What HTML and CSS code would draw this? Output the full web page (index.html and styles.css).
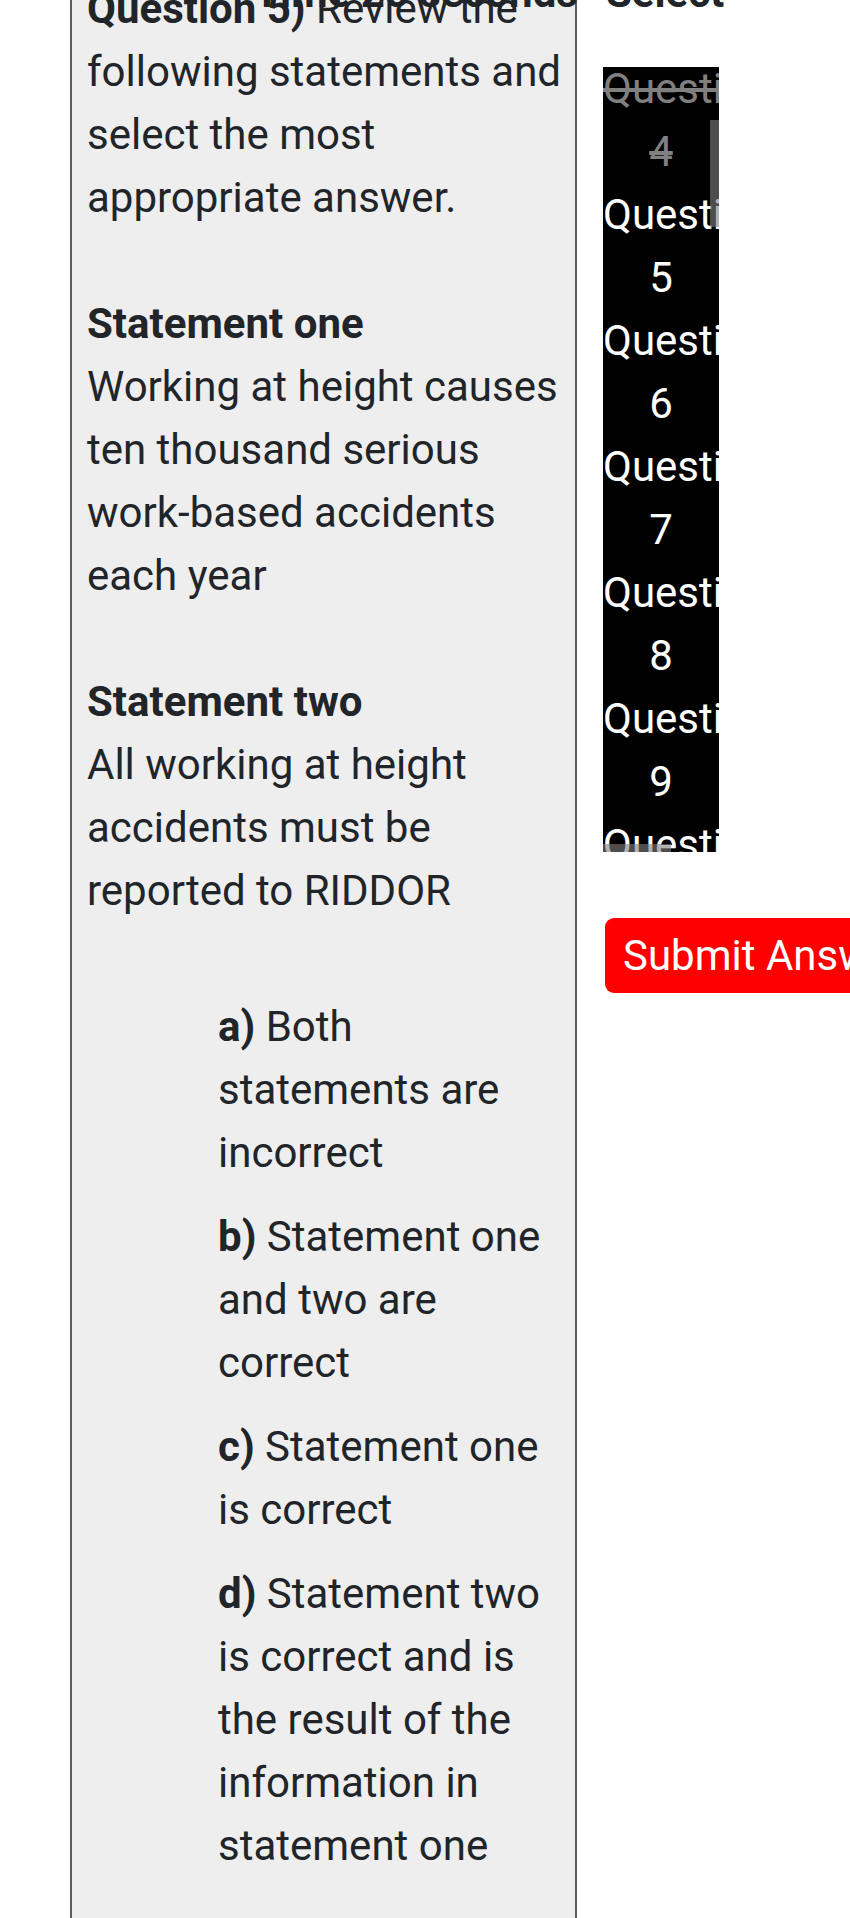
FILE: index.html
```html
<!DOCTYPE html>
<html lang="en">
<head>
<meta charset="utf-8">
<title>Quiz</title>
<link rel="stylesheet" href="styles.css">
</head>
<body>
<div class="timer">Time 25 seconds<span class="select">Select</span></div>
<div class="page">
  <section class="panel">
    <p class="para"><b>Question 5)</b> Review the following statements and select the most appropriate answer.</p>
    <p class="para"><b>Statement one</b><br>Working at height causes ten thousand serious work-based accidents each year</p>
    <p class="para last"><b>Statement two</b><br>All working at height accidents must be reported to RIDDOR</p>
    <ul class="options">
      <li class="option"><b>a)</b> Both statements are incorrect</li>
      <li class="option"><b>b)</b> Statement one and two are correct</li>
      <li class="option"><b>c)</b> Statement one is correct</li>
      <li class="option"><b>d)</b> Statement two is correct and is the result of the information in statement one</li>
    </ul>
  </section>
  <aside class="side">
    <div class="navwrap">
      <div class="nav">
        <div class="navlist">
          <div class="navitem done">Question 4</div>
          <div class="navitem">Question 5</div>
          <div class="navitem">Question 6</div>
          <div class="navitem">Question 7</div>
          <div class="navitem">Question 8</div>
          <div class="navitem">Question 9</div>
          <div class="navitem">Question 10</div>
        </div>
      </div>
      <div class="thumb-v"></div>
      <div class="thumb-h"></div>
    </div>
    <button class="submit">Submit Answer</button>
  </aside>
</div>
</body>
</html>
```
FILE: styles.css
```css
html, body {
  margin: 0;
  padding: 0;
  background: #ffffff;
}
body {
  font-family: Roboto, "Liberation Sans", Arial, sans-serif;
  font-size: 42px;
  line-height: 63px;
  color: #212529;
  overflow: hidden;
  width: 850px;
  height: 1918px;
  position: relative;
}
.timer {
  position: absolute;
  top: -39px;
  left: 254px;
  font-weight: 700;
  white-space: nowrap;
  z-index: 2;
  color: #212529;
}
.select {
  margin-left: 28px;
}
.page {
  display: flex;
  align-items: flex-start;
  margin-top: -40px;
  width: 850px;
  overflow: hidden;
}
.panel {
  box-sizing: border-box;
  flex: 0 0 507px;
  margin-left: 70px;
  background: #eeeeef;
  border-left: 2px solid #5c5c5c;
  border-right: 2px solid #5c5c5c;
  padding: 17px 6px 120px 15px;
}
.para {
  margin: 0 0 63px 0;
}
.para.last {
  margin-bottom: 0;
}
.options {
  list-style: none;
  margin: 73px 9px 0 131px;
  padding: 0;
}
.option {
  margin: 0 0 21px 0;
}
.side {
  flex: 0 0 auto;
  margin-left: 26px;
  padding-top: 107px;
  display: flex;
  flex-direction: column;
  align-items: flex-start;
}
.navwrap {
  position: relative;
  width: 116px;
  height: 785px;
}
.nav {
  width: 116px;
  height: 785px;
  background: #000000;
  overflow: hidden;
}
.navlist {
  margin-top: -10px;
}
.navitem {
  color: #ffffff;
  text-align: center;
}
.navitem.done {
  color: #808080;
  text-decoration: line-through;
}
.thumb-v {
  position: absolute;
  right: 0;
  top: 53px;
  width: 9px;
  height: 107px;
  background: rgba(128, 128, 128, 0.6);
}
.thumb-h {
  position: absolute;
  left: 0;
  bottom: 0;
  width: 68px;
  height: 8px;
  background: rgba(128, 128, 128, 0.6);
}
.submit {
  margin-top: 66px;
  margin-left: 2px;
  font-family: Roboto, "Liberation Sans", Arial, sans-serif;
  font-size: 42px;
  line-height: 63px;
  color: #ffffff;
  background: #ff0000;
  border: none;
  border-radius: 9px;
  padding: 6px 18px;
  white-space: nowrap;
  text-align: left;
}
```
